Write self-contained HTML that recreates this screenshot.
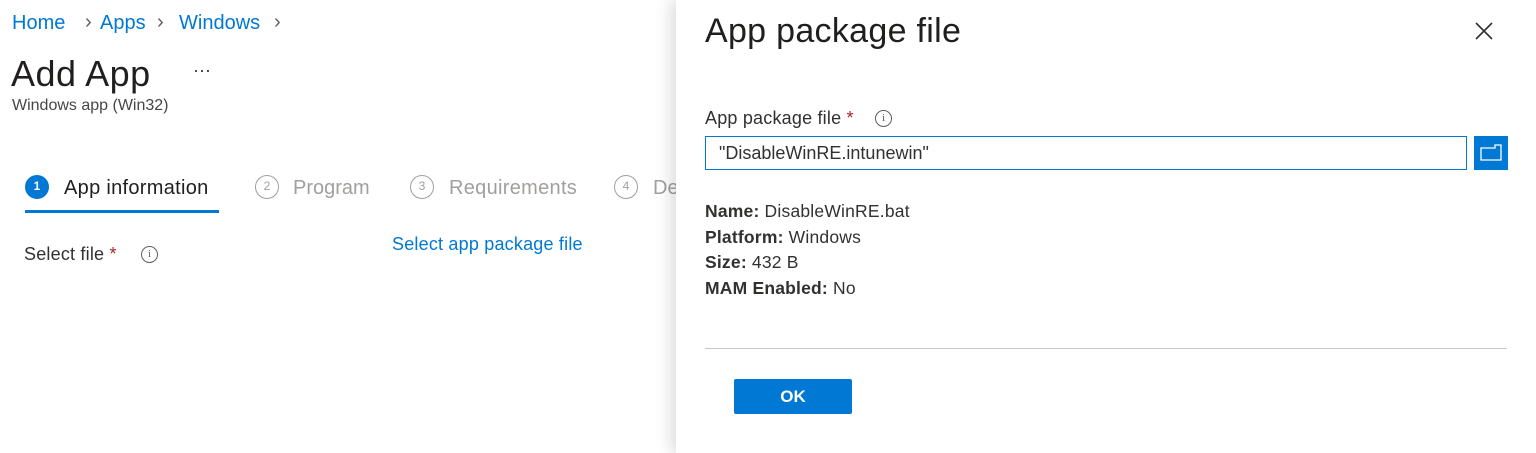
<!DOCTYPE html>
<html><head><style>
*{margin:0;padding:0;box-sizing:border-box}
body{width:1536px;height:453px;overflow:hidden;background:#fff;font-family:"Liberation Sans",sans-serif;color:#323130;position:relative}
.a{position:absolute;white-space:nowrap}
.blue{color:#0078d4}
.grey{color:#a19f9d}
.circ{position:absolute;width:24px;height:24px;border-radius:50%;border:1.5px solid #a19f9d;font-size:12px;text-align:center;line-height:21px;color:#a19f9d}
.info{position:absolute;width:17px;height:17px;border-radius:50%;border:1px solid #605e5c;font-size:11px;text-align:center;line-height:15px;color:#605e5c;font-family:"Liberation Serif",serif}
.panel{position:absolute;left:676px;top:0;width:860px;height:453px;background:#fff;box-shadow:-6px 0 14px rgba(0,0,0,.13)}
b{font-weight:bold}
</style></head><body>
<div class="a blue" style="left:12px;top:12px;font-size:20px">Home</div>
<div class="a" style="left:85px;top:11px;font-size:20px;color:#605e5c">&#x203A;</div>
<div class="a blue" style="left:100px;top:12px;font-size:20px">Apps</div>
<div class="a" style="left:157px;top:11px;font-size:20px;color:#605e5c">&#x203A;</div>
<div class="a blue" style="left:179px;top:12px;font-size:20px">Windows</div>
<div class="a" style="left:274px;top:11px;font-size:20px;color:#605e5c">&#x203A;</div>
<div class="a" style="left:11px;top:53px;font-size:36px;color:#201f1e;letter-spacing:0.5px">Add App</div>
<div class="a" style="left:193px;top:60px;font-size:18px">···</div>
<div class="a" style="left:12px;top:97px;font-size:16px;color:#484644">Windows app (Win32)</div>
<div class="circ" style="left:25px;top:175px;background:#0078d4;border-color:#0078d4;color:#fff;font-weight:bold">1</div>
<div class="a" style="left:64px;top:177px;font-size:20px;color:#201f1e;letter-spacing:0.3px">App information</div>
<div style="position:absolute;left:25px;top:210px;width:194px;height:3px;background:#0078d4"></div>
<div class="circ" style="left:255px;top:175px">2</div>
<div class="a grey" style="left:293px;top:177px;font-size:20px">Program</div>
<div class="circ" style="left:410px;top:175px">3</div>
<div class="a grey" style="left:449px;top:177px;font-size:20px;letter-spacing:0.3px">Requirements</div>
<div class="circ" style="left:614px;top:175px">4</div>
<div class="a grey" style="left:653px;top:177px;font-size:20px">De</div>
<div class="a" style="left:24px;top:244px;font-size:18px;letter-spacing:0.2px">Select file <span style="color:#a4262c">*</span></div>
<div class="info" style="left:141px;top:246px">i</div>
<div class="a blue" style="left:392px;top:234px;font-size:18px;letter-spacing:0.2px">Select app package file</div>

<div class="panel">
<div class="a" style="left:29px;top:12px;font-size:34px;color:#201f1e;letter-spacing:0.3px">App package file</div>
<svg class="a" style="left:798px;top:21px" width="20" height="20" viewBox="0 0 20 20"><path d="M2 2L18 18M18 2L2 18" stroke="#323130" stroke-width="1.6"/></svg>
<div class="a" style="left:29px;top:108px;font-size:18px;letter-spacing:0.2px">App package file <span style="color:#a4262c">*</span></div>
<div class="info" style="left:199px;top:110px">i</div>
<div style="position:absolute;left:29px;top:136px;width:762px;height:34px;border:1px solid #0078d4;font-size:18px;padding:6px 13px;color:#323130">"DisableWinRE.intunewin"</div>
<div style="position:absolute;left:798px;top:136px;width:34px;height:34px;background:#0078d4">
<svg width="34" height="34" viewBox="0 0 34 34"><path d="M7 12H21V9H27V24H7Z M21 12V9" fill="none" stroke="#fff" stroke-width="1.3"/></svg></div>
<div class="a" style="left:29px;top:199px;font-size:17.5px;line-height:25.5px;letter-spacing:0.2px"><b>Name:</b> DisableWinRE.bat<br><b>Platform:</b> Windows<br><b>Size:</b> 432 B<br><b>MAM Enabled:</b> No</div>
<div style="position:absolute;left:29px;top:348px;width:802px;height:1px;background:#c8c6c4"></div>
<div style="position:absolute;left:58px;top:379px;width:118px;height:35px;background:#0078d4;border-radius:2px;color:#fff;font-weight:bold;font-size:17px;text-align:center;line-height:35px">OK</div>
</div>
</body></html>
